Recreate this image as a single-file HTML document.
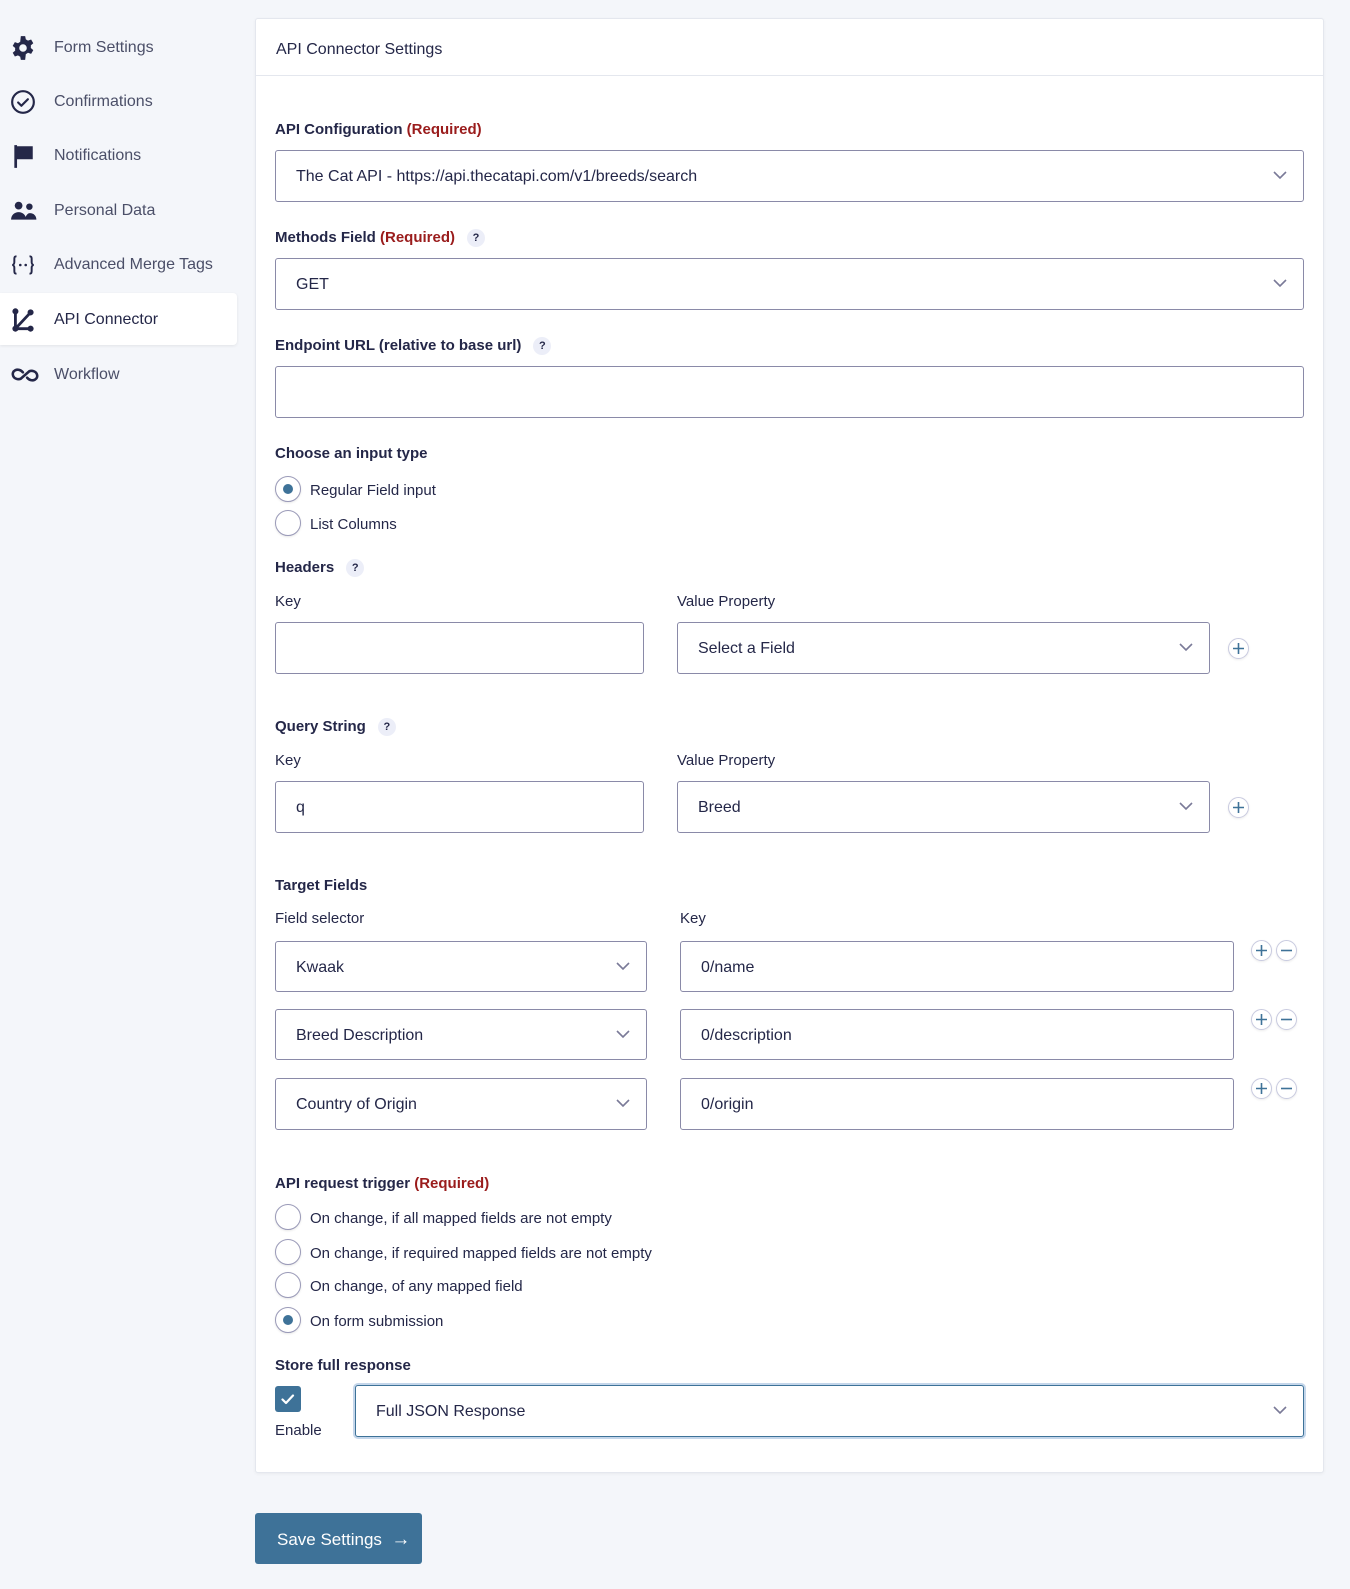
<!DOCTYPE html>
<html><head><meta charset="utf-8"><style>
*{box-sizing:border-box;margin:0;padding:0}
body{width:1350px;height:1589px;background:#f4f6fa;font-family:"Liberation Sans",sans-serif;color:#242748;position:relative;overflow:hidden;font-size:16px}
.a{position:absolute}
.nav{position:absolute;left:0;width:237px;height:52px;display:flex;align-items:center;font-size:16px;color:#4b4f68}
.nav svg{position:absolute;left:10px;top:14px}
.nav span{position:absolute;left:54px;padding-top:2px}
.nav.act{background:#fff;border-radius:0 4px 4px 0;box-shadow:0 1px 3px rgba(0,0,0,.08);color:#242748}
.panel{position:absolute;left:255px;top:18px;width:1069px;height:1455px;background:#fff;border:1px solid #e4e7ee;border-radius:3px;box-shadow:0 1px 3px rgba(0,0,0,.05)}
.lbl{position:absolute;font-weight:bold;font-size:15px;color:#242748;padding-top:2px}
.req{color:#9a1c1c}
.sub{position:absolute;font-size:15px;color:#242748;padding-top:2px}
.box{position:absolute;border:1px solid #8a8aa8;border-radius:3px;background:#fff;font-size:16px;display:flex;align-items:center;padding-left:20px;padding-top:2px;color:#242748}
.chev{position:absolute;right:16px;top:50%;margin-top:-5px}
.q{display:inline-block;width:18px;height:18px;border-radius:50%;background:#eceef8;font-size:11px;text-align:center;line-height:18px;font-weight:bold;margin-left:12px;vertical-align:1px;color:#242748}
.radio{position:absolute;width:26px;height:26px;border:1.5px solid #9a9ab8;border-radius:50%;background:#fff;box-shadow:0 1px 2px rgba(0,0,0,.1)}
.radio.on::after{content:"";position:absolute;left:6.5px;top:6.5px;width:10px;height:10px;border-radius:50%;background:#3e7298}
.rl{position:absolute;font-size:15px;color:#242748;padding-top:2px}
.pm{position:absolute;width:21px;height:21px;border:1px solid #c9cbe0;border-radius:50%;background:#fff;box-shadow:0 1px 2px rgba(0,0,0,.08)}
</style></head><body>

<div class="nav" style="top:21px"><svg width="26" height="26" viewBox="0 0 24 24"><path fill="#242748" d="M10 1h4l.6 3a8 8 0 0 1 2 1.2l2.9-1 2 3.4-2.3 2a8 8 0 0 1 0 2.4l2.3 2-2 3.4-2.9-1a8 8 0 0 1-2 1.2L14 23h-4l-.6-3a8 8 0 0 1-2-1.2l-2.9 1-2-3.4 2.3-2a8 8 0 0 1 0-2.4l-2.3-2 2-3.4 2.9 1a8 8 0 0 1 2-1.2zM12 8.5a3.5 3.5 0 1 0 0 7 3.5 3.5 0 0 0 0-7z"/></svg><span>Form Settings</span></div>
<div class="nav" style="top:75px"><svg width="26" height="26" viewBox="0 0 24 24"><circle cx="12" cy="12" r="10" fill="none" stroke="#242748" stroke-width="2"/><path d="M7.5 12.5l3 3 6-6" fill="none" stroke="#242748" stroke-width="2" stroke-linecap="round" stroke-linejoin="round"/></svg><span>Confirmations</span></div>
<div class="nav" style="top:129px"><svg width="26" height="26" viewBox="0 0 24 24"><path fill="#242748" d="M4 2h2.5v21H4zM6.5 3H21v12H6.5z"/></svg><span>Notifications</span></div>
<div class="nav" style="top:184px"><svg width="28" height="26" viewBox="0 0 26 24"><circle cx="8" cy="7" r="3.6" fill="#242748"/><circle cx="18" cy="8" r="3" fill="#242748"/><path fill="#242748" d="M1 20c0-4 3-7 7-7s7 3 7 7zM14 20c.3-3 2-6 4.5-6 3.5 0 6 2.5 6 6z"/></svg><span>Personal Data</span></div>
<div class="nav" style="top:238px"><svg width="26" height="26" viewBox="0 0 24 24"><path d="M6 4C4 4 4 5 4 7v2.5C4 11 3 12 2 12c1 0 2 1 2 2.5V17c0 2 0 3 2 3M18 4c2 0 2 1 2 3v2.5c0 1.5 1 2.5 2 2.5-1 0-2 1-2 2.5V17c0 2 0 3-2 3" fill="none" stroke="#242748" stroke-width="1.8"/><circle cx="9.5" cy="12" r="1.2" fill="#242748"/><circle cx="14.5" cy="12" r="1.2" fill="#242748"/></svg><span>Advanced Merge Tags</span></div>
<div class="nav act" style="top:293px"><svg width="26" height="26" viewBox="0 0 24 24"><circle cx="5" cy="4" r="2.8" fill="#242748"/><circle cx="19" cy="5" r="2.8" fill="#242748"/><circle cx="5" cy="20" r="2.8" fill="#242748"/><circle cx="19" cy="20" r="2.8" fill="#242748"/><path d="M5 4v16M5 20h14M5 20L19 5" stroke="#242748" stroke-width="2.6" fill="none"/></svg><span>API Connector</span></div>
<div class="nav" style="top:348px"><svg width="30" height="26" viewBox="0 0 28 24"><path d="M12 9.5C10 7 7 6.5 5 7.5S2 10.5 3 13s4.5 3.5 7 2.5M16 14.5c2 2.5 5 3 7 2s3-3 2-5.5-4.5-3.5-7-2.5L10 15.5" fill="none" stroke="#242748" stroke-width="2.4" stroke-linecap="round"/></svg><span>Workflow</span></div>

<div class="panel">
  <div class="a" style="left:20px;top:22px;font-size:16px">API Connector Settings</div>
  <div class="a" style="left:0;top:56px;width:100%;height:1px;background:#e4e7ee"></div>
</div>

<div class="lbl" style="left:275px;top:119px">API Configuration <span class="req">(Required)</span></div>
<div class="box" style="left:275px;top:150px;width:1029px;height:52px">The Cat API - https://api.thecatapi.com/v1/breeds/search<svg class="chev" width="14" height="9" viewBox="0 0 14 9"><path d="M1 1l6 6 6-6" fill="none" stroke="#7a7a98" stroke-width="1.6"/></svg></div>

<div class="lbl" style="left:275px;top:227px">Methods Field <span class="req">(Required)</span><span class="q">?</span></div>
<div class="box" style="left:275px;top:258px;width:1029px;height:52px">GET<svg class="chev" width="14" height="9" viewBox="0 0 14 9"><path d="M1 1l6 6 6-6" fill="none" stroke="#7a7a98" stroke-width="1.6"/></svg></div>

<div class="lbl" style="left:275px;top:335px">Endpoint URL (relative to base url)<span class="q">?</span></div>
<div class="box" style="left:275px;top:366px;width:1029px;height:52px"></div>

<div class="lbl" style="left:275px;top:443px">Choose an input type</div>
<div class="radio on" style="left:275px;top:476px"></div><div class="rl" style="left:310px;top:480px">Regular Field input</div>
<div class="radio" style="left:275px;top:510px"></div><div class="rl" style="left:310px;top:514px">List Columns</div>

<div class="lbl" style="left:275px;top:557px">Headers<span class="q">?</span></div>
<div class="sub" style="left:275px;top:591px">Key</div>
<div class="sub" style="left:677px;top:591px">Value Property</div>
<div class="box" style="left:275px;top:622px;width:369px;height:52px"></div>
<div class="box" style="left:677px;top:622px;width:533px;height:52px">Select a Field<svg class="chev" width="14" height="9" viewBox="0 0 14 9"><path d="M1 1l6 6 6-6" fill="none" stroke="#7a7a98" stroke-width="1.6"/></svg></div>
<div class="pm" style="left:1228px;top:638px"><svg width="19" height="19" viewBox="0 0 19 19"><path d="M9.5 4v11M4 9.5h11" stroke="#3e7298" stroke-width="1.6"/></svg></div>

<div class="lbl" style="left:275px;top:716px">Query String<span class="q">?</span></div>
<div class="sub" style="left:275px;top:750px">Key</div>
<div class="sub" style="left:677px;top:750px">Value Property</div>
<div class="box" style="left:275px;top:781px;width:369px;height:52px">q</div>
<div class="box" style="left:677px;top:781px;width:533px;height:52px">Breed<svg class="chev" width="14" height="9" viewBox="0 0 14 9"><path d="M1 1l6 6 6-6" fill="none" stroke="#7a7a98" stroke-width="1.6"/></svg></div>
<div class="pm" style="left:1228px;top:797px"><svg width="19" height="19" viewBox="0 0 19 19"><path d="M9.5 4v11M4 9.5h11" stroke="#3e7298" stroke-width="1.6"/></svg></div>

<div class="lbl" style="left:275px;top:875px">Target Fields</div>
<div class="sub" style="left:275px;top:908px">Field selector</div>
<div class="sub" style="left:680px;top:908px">Key</div>

<div class="box" style="left:275px;top:941px;width:372px;height:51px">Kwaak<svg class="chev" width="14" height="9" viewBox="0 0 14 9"><path d="M1 1l6 6 6-6" fill="none" stroke="#7a7a98" stroke-width="1.6"/></svg></div>
<div class="box" style="left:680px;top:941px;width:554px;height:51px">0/name</div>
<div class="pm" style="left:1251px;top:940px"><svg width="19" height="19" viewBox="0 0 19 19"><path d="M9.5 4v11M4 9.5h11" stroke="#3e7298" stroke-width="1.6"/></svg></div>
<div class="pm" style="left:1276px;top:940px"><svg width="19" height="19" viewBox="0 0 19 19"><path d="M4 9.5h11" stroke="#3e7298" stroke-width="1.6"/></svg></div>

<div class="box" style="left:275px;top:1009px;width:372px;height:51px">Breed Description<svg class="chev" width="14" height="9" viewBox="0 0 14 9"><path d="M1 1l6 6 6-6" fill="none" stroke="#7a7a98" stroke-width="1.6"/></svg></div>
<div class="box" style="left:680px;top:1009px;width:554px;height:51px">0/description</div>
<div class="pm" style="left:1251px;top:1009px"><svg width="19" height="19" viewBox="0 0 19 19"><path d="M9.5 4v11M4 9.5h11" stroke="#3e7298" stroke-width="1.6"/></svg></div>
<div class="pm" style="left:1276px;top:1009px"><svg width="19" height="19" viewBox="0 0 19 19"><path d="M4 9.5h11" stroke="#3e7298" stroke-width="1.6"/></svg></div>

<div class="box" style="left:275px;top:1078px;width:372px;height:52px">Country of Origin<svg class="chev" width="14" height="9" viewBox="0 0 14 9"><path d="M1 1l6 6 6-6" fill="none" stroke="#7a7a98" stroke-width="1.6"/></svg></div>
<div class="box" style="left:680px;top:1078px;width:554px;height:52px">0/origin</div>
<div class="pm" style="left:1251px;top:1078px"><svg width="19" height="19" viewBox="0 0 19 19"><path d="M9.5 4v11M4 9.5h11" stroke="#3e7298" stroke-width="1.6"/></svg></div>
<div class="pm" style="left:1276px;top:1078px"><svg width="19" height="19" viewBox="0 0 19 19"><path d="M4 9.5h11" stroke="#3e7298" stroke-width="1.6"/></svg></div>

<div class="lbl" style="left:275px;top:1173px">API request trigger <span class="req">(Required)</span></div>
<div class="radio" style="left:275px;top:1204px"></div><div class="rl" style="left:310px;top:1208px">On change, if all mapped fields are not empty</div>
<div class="radio" style="left:275px;top:1239px"></div><div class="rl" style="left:310px;top:1243px">On change, if required mapped fields are not empty</div>
<div class="radio" style="left:275px;top:1272px"></div><div class="rl" style="left:310px;top:1276px">On change, of any mapped field</div>
<div class="radio on" style="left:275px;top:1307px"></div><div class="rl" style="left:310px;top:1311px">On form submission</div>

<div class="lbl" style="left:275px;top:1355px">Store full response</div>
<div class="a" style="left:275px;top:1386px;width:26px;height:26px;background:#3e7298;border-radius:3px"><svg width="26" height="26" viewBox="0 0 26 26"><path d="M7.5 13.5l3.5 3.5 7-7.5" fill="none" stroke="#fff" stroke-width="2.2" stroke-linecap="round" stroke-linejoin="round"/></svg></div>
<div class="rl" style="left:275px;top:1420px">Enable</div>
<div class="box" style="left:355px;top:1385px;width:949px;height:52px;border:1.5px solid #3e7298;box-shadow:0 0 0 2px #c4d6ea">Full JSON Response<svg class="chev" width="14" height="9" viewBox="0 0 14 9"><path d="M1 1l6 6 6-6" fill="none" stroke="#7a7a98" stroke-width="1.6"/></svg></div>

<div class="a" style="left:255px;top:1513px;width:167px;height:51px;background:#3e7298;border-radius:3px;color:#fff;font-size:17px;display:flex;align-items:center;padding-left:22px;padding-top:2px">Save Settings&nbsp;&nbsp;<span style="font-size:19px">→</span></div>
</body></html>
